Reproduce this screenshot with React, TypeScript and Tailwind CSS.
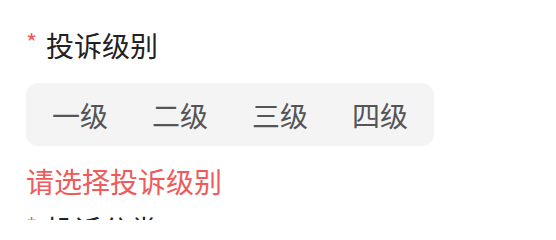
const levels = ["一级", "二级", "三级", "四级"];

const FieldLabel = ({ text }: { text: string }) => (
  <div className="flex h-[40px] items-center">
    <span className="mb-[6px] w-[20px] text-[24px] leading-none text-[#f05a5a]">*</span>
    <span className="text-[28px] leading-none text-[#222222]">{text}</span>
  </div>
);

export default function App() {
  return (
    <div
      className="h-[220px] w-[556px] overflow-hidden bg-white pl-[26px] pt-[25px]"
      style={{ fontFamily: '"Noto Sans CJK SC", "Noto Sans", sans-serif' }}
    >
      <FieldLabel text="投诉级别" />
      <div className="mt-[18px] flex h-[63px] w-[408px] items-center rounded-[12px] bg-[#f4f4f4] px-[4px]">
        {levels.map((l) => (
          <div key={l} className="w-[100px] text-center text-[28px] leading-none text-[#555555]">
            {l}
          </div>
        ))}
      </div>
      <div className="mt-[15px] flex h-[40px] items-center text-[28px] leading-none text-[#f05a5a]">
        请选择投诉级别
      </div>
      <div className="mt-[8px]">
        <FieldLabel text="投诉分类" />
      </div>
    </div>
  );
}
